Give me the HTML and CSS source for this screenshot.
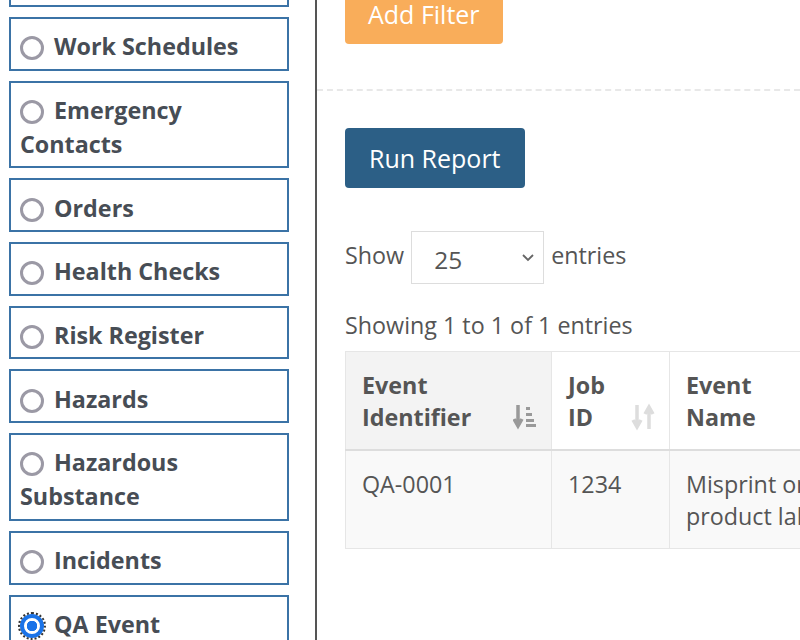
FILE: index.html
```html
<!DOCTYPE html>
<html lang="en">
<head>
    <meta charset="UTF-8">
    <title>Reports</title>
    <link rel="stylesheet" href="styles.css">
</head>
<body>
    <div class="pagina">
        <div class="lateral">
            <div class="lista">
                <label class="opcion"><span class="radio"></span>Training</label>
                <label class="opcion"><span class="radio"></span>Work Schedules</label>
                <label class="opcion"><span class="radio"></span>Emergency Contacts</label>
                <label class="opcion"><span class="radio"></span>Orders</label>
                <label class="opcion"><span class="radio"></span>Health Checks</label>
                <label class="opcion"><span class="radio"></span>Risk Register</label>
                <label class="opcion"><span class="radio"></span>Hazards</label>
                <label class="opcion"><span class="radio"></span>Hazardous Substance</label>
                <label class="opcion"><span class="radio"></span>Incidents</label>
                <label class="opcion"><span class="radio activo"></span>QA Event</label>
            </div>
        </div>
        <div class="principal">
            <div class="filtros">
                <button class="boton naranja">Add Filter</button>
            </div>
            <div class="reporte">
                <button class="boton azul">Run Report</button>
                <div class="mostrar">
                    <span class="etiqueta">Show</span>
                    <div class="selector">
                        <span>25</span>
                        <svg width="14" height="9" viewBox="0 0 14 9"><path d="M2 2 L7 7 L12 2" fill="none" stroke="#666" stroke-width="1.8"/></svg>
                    </div>
                    <span class="etiqueta">entries</span>
                </div>
                <div class="info">Showing 1 to 1 of 1 entries</div>
                <table class="tabla">
                    <thead>
                        <tr>
                            <th class="ordenado col1">
                                <div class="celda">Event<br>Identifier
                                    <svg class="icono" width="24" height="28" viewBox="0 0 24 28"><path d="M5 2 V21 M1 16 L5 23 L9 16" fill="none" stroke="#999" stroke-width="3.5"/><rect x="13" y="4" width="4" height="3" fill="#999"/><rect x="13" y="10" width="6" height="3" fill="#999"/><rect x="13" y="16" width="8" height="3" fill="#999"/><rect x="13" y="21" width="10" height="3" fill="#999"/></svg>
                                </div>
                            </th>
                            <th class="col2">
                                <div class="celda">Job<br>ID
                                    <svg class="icono" width="24" height="28" viewBox="0 0 24 28"><path d="M6 2 V23 M2 17 L6 24 L10 17" fill="none" stroke="#ddd" stroke-width="3.5"/><path d="M18 26 V6 M14 11 L18 4 L22 11" fill="none" stroke="#ddd" stroke-width="3.5"/></svg>
                                </div>
                            </th>
                            <th class="col3"><div class="celda">Event<br>Name</div></th>
                        </tr>
                    </thead>
                    <tbody>
                        <tr>
                            <td>QA-0001</td>
                            <td>1234</td>
                            <td>Misprint on product label</td>
                        </tr>
                    </tbody>
                </table>
            </div>
        </div>
    </div>
</body>
</html>
```

FILE: styles.css
```css
body {
    margin: 0;
    font-family: "Open Sans", "Liberation Sans", sans-serif;
    background: #ffffff;
    overflow: hidden;
    height: 640px;
}
.pagina {
    display: flex;
    height: 640px;
}
.lateral {
    width: 315px;
    flex-shrink: 0;
    border-right: 2px solid #555;
}
.lista {
    display: flex;
    flex-direction: column;
    gap: 10px;
    margin-top: -46.7px;
    padding-left: 9px;
}
.opcion {
    display: block;
    width: 258px;
    border: 2px solid #3b73a6;
    padding: 10.2px 9px 5.5px;
    font-size: 23.3px;
    line-height: 34px;
    font-weight: bold;
    color: #474d55;
}
.radio {
    display: inline-block;
    width: 18px;
    height: 18px;
    border: 3px solid #9b99a5;
    border-radius: 50%;
    margin-right: 10px;
    vertical-align: -5px;
}
.radio.activo {
    border: 4px solid #1a73e8;
    width: 16px;
    height: 16px;
    background: radial-gradient(circle, #1a73e8 0 5px, #fff 5.5px);
    outline: 2px dotted #333;
    outline-offset: 0;
}
.principal {
    flex: 1;
    overflow: hidden;
}
.filtros {
    padding: 0 0 0 28px;
    height: 89px;
    border-bottom: 2px dashed #e8e8e8;
}
.boton {
    border: none;
    border-radius: 4px;
    color: #fff;
    font-family: inherit;
    font-size: 25px;
    padding: 0 24px;
    height: 60px;
}
.naranja {
    background: #f9ad5a;
    margin-top: -16px;
    padding: 0 23px;
}
.azul {
    background: #2c5f86;
}
.reporte {
    padding: 37px 0 0 28px;
}
.mostrar {
    display: flex;
    align-items: center;
    margin-top: 43px;
    font-size: 23.3px;
    color: #555;
    gap: 7px;
}
.etiqueta {
    padding-bottom: 6px;
}
.selector {
    height: 51px;
    border: 1px solid #ddd;
    display: flex;
    align-items: center;
    justify-content: space-between;
    padding: 0 8px 0 22px;
    box-sizing: content-box;
    width: 101px;
    font-size: 24.5px;
}
.selector span {
    padding-top: 4px;
}
.info {
    margin-top: 25px;
    font-size: 23.3px;
    color: #555;
}
.tabla {
    margin-top: 10px;
    border-collapse: collapse;
    width: 560px;
    font-size: 23.3px;
    color: #555;
    line-height: 32px;
    table-layout: fixed;
}
.tabla th,
.tabla td {
    text-align: left;
    vertical-align: top;
    border: 1px solid #e6e6e6;
    padding: 17px 16px 16px 16px;
}
.tabla th {
    border-bottom: 2px solid #ddd;
    background: #fff;
}
.tabla th.ordenado {
    background: #f3f3f3;
}
.tabla td {
    background: #f9f9f9;
}
.col1 { width: 173px; }
.col2 { width: 85px; }
.celda {
    position: relative;
}
.icono {
    position: absolute;
    right: -2px;
    bottom: 2px;
}
```
